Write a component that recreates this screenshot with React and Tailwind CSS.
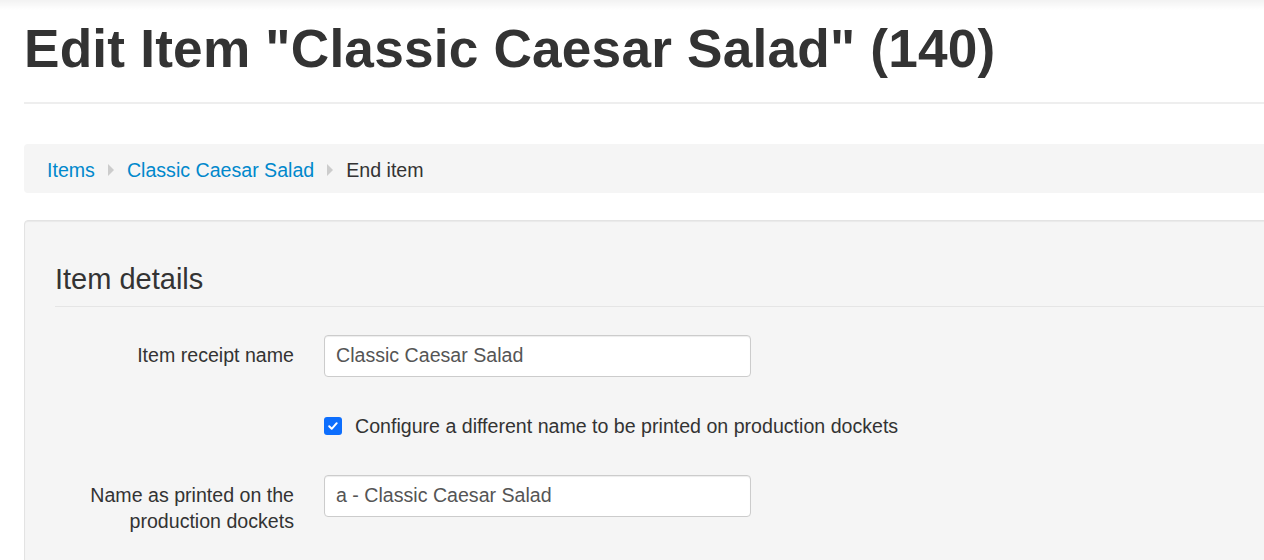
import React from "react";

function Crumb({ children, last }) {
  return (
    <>
      <span className={last ? "text-[#333]" : "text-[#0088cc]"}>{children}</span>
      {!last && (
        <span className="mx-[13px] inline-block h-0 w-0 border-y-[6px] border-l-[6px] border-y-transparent border-l-[#cccccc]" />
      )}
    </>
  );
}

function Field({ label, value }) {
  return (
    <div className="flex items-start">
      <label className="w-[239px] shrink-0 pt-[7px] text-right leading-[26px]">{label}</label>
      <input
        readOnly
        value={value}
        className="ml-[30px] h-[42px] w-[427px] rounded-[4px] border border-[#cccccc] bg-white pb-[2px] pl-[11px] text-[19.6px] text-[#555] shadow-[inset_0_1px_1px_rgba(0,0,0,0.075)] outline-none"
      />
    </div>
  );
}

export default function App() {
  return (
    <div className="relative h-[560px] w-full overflow-hidden bg-white font-['Liberation_Sans',Arial,sans-serif] text-[19.6px] text-[#333]">
      <div className="absolute inset-x-0 top-0 h-[10px] bg-gradient-to-b from-black/[0.05] to-transparent" />

      <div className="w-[1400px] pl-[24px] pt-[19px]">
        <h1 className="text-[53.2px] font-bold leading-[60px] tracking-[0.2px]">
          Edit Item "Classic Caesar Salad" (140)
        </h1>
        <div className="mt-[23px] h-[2px] bg-[#eeeeee]" />

        {/* breadcrumb */}
        <nav className="mt-[40px] flex items-center rounded-[4px] bg-[#f5f5f5] pb-[10px] pl-[23px] pt-[13px] leading-[26px]">
          <Crumb>Items</Crumb>
          <Crumb>Classic Caesar Salad</Crumb>
          <Crumb last>End item</Crumb>
        </nav>

        {/* well */}
        <div className="mt-[27px] h-[400px] rounded-[4px] border border-[#e3e3e3] bg-[#f5f5f5] pl-[30px] pt-[32px] shadow-[inset_0_1px_1px_rgba(0,0,0,0.05)]">
          <div className="border-b border-[#e5e5e5] text-[29px] leading-[53px]">Item details</div>

          <div className="mt-[28px]">
            <Field label="Item receipt name" value="Classic Caesar Salad" />
          </div>

          <div className="mt-[36px] flex items-center pl-[269px] leading-[26px]">
            <span className="flex h-[18px] w-[18px] items-center justify-center rounded-[3px] bg-[#0d6efd]">
              <svg width="12" height="12" viewBox="0 0 12 12" fill="none">
                <path d="M2.2 6.3l2.5 2.5 5-5.6" stroke="white" strokeWidth="2" strokeLinecap="round" strokeLinejoin="round" />
              </svg>
            </span>
            <span className="ml-[13px]">Configure a different name to be printed on production dockets</span>
          </div>

          <div className="mt-[36px]">
            <Field
              label={
                <>
                  Name as printed on the
                  <br />
                  production dockets
                </>
              }
              value="a - Classic Caesar Salad"
            />
          </div>
        </div>
      </div>
    </div>
  );
}
